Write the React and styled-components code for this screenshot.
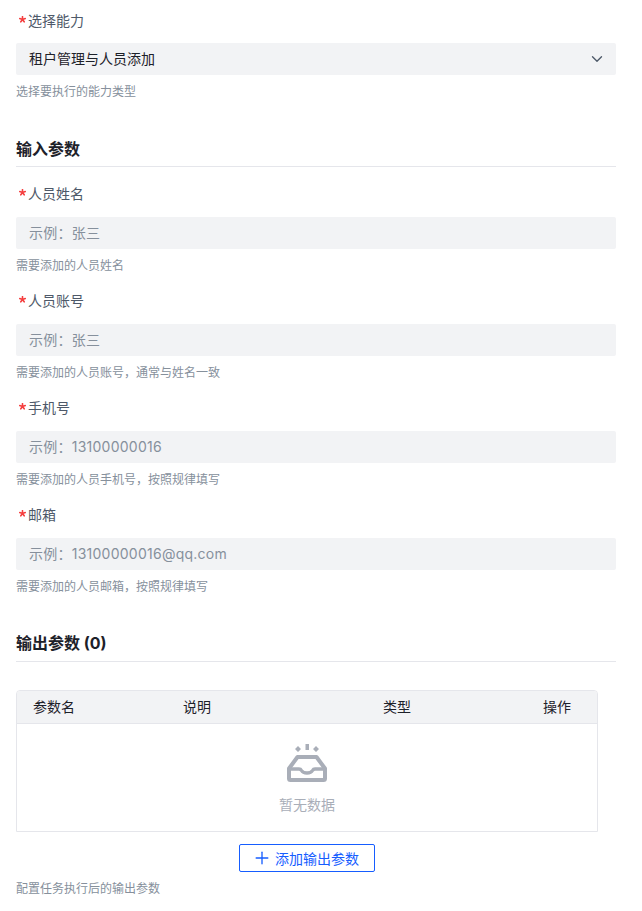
import React from 'react'
import styled, { createGlobalStyle } from 'styled-components'
import { ChevronDown, Plus } from 'lucide-react'

const GlobalStyle = createGlobalStyle`
  html, body {
    margin: 0;
    padding: 0;
    background: #fff;
    font-family: Inter, "Noto Sans CJK SC", sans-serif;
  }
`
const Page = styled.div`
  width: 642px;
  height: 911px;
  padding: 10px 26px 0 16px;
  box-sizing: border-box;
  overflow: hidden;
`
const Field = styled.div`
  margin-bottom: ${props => props.$last ? '0' : '14px'};
`
const Label = styled.div`
  display: flex;
  align-items: center;
  height: 22px;
  margin-bottom: ${props => props.$tight ? '11px' : '12px'};
  padding-bottom: 2px;
  box-sizing: border-box;
  font-size: 14px;
  color: #4e5969;
`
const Star = styled.svg`
  flex: none;
  width: 7px;
  height: 7px;
  margin: 0 2px 2px 3px;
`
const InputBox = styled.input`
  display: block;
  width: 100%;
  height: 32px;
  padding: 0 12px 1px 13px;
  box-sizing: border-box;
  border: none;
  border-radius: 2px;
  outline: none;
  background: #f2f3f5;
  font-family: inherit;
  font-size: 14px;
  letter-spacing: 0.25px;
  color: #1d2129;
  &::placeholder {
    color: #86909c;
    opacity: 1;
  }
`
const SelectBox = styled.div`
  display: flex;
  align-items: center;
  justify-content: space-between;
  height: 32px;
  padding: 0 10px 2px 13px;
  box-sizing: border-box;
  border-radius: 2px;
  background: #f2f3f5;
  font-size: 14px;
  color: #1d2129;
  svg {
    color: #4e5969;
    margin-top: 2px;
  }
`
const Help = styled.div`
  height: 20px;
  margin-top: 7px;
  font-size: 12px;
  line-height: 20px;
  color: #86909c;
`
const SectionTitle = styled.h3`
  height: 24px;
  margin: ${props => props.$before}px 0 ${props => props.$after}px;
  padding-bottom: ${props => props.$pad}px;
  border-bottom: 1px solid #e5e6eb;
  font-size: 16px;
  font-weight: 700;
  line-height: 24px;
  color: #1d2129;
`
const TableWrap = styled.div`
  width: 582px;
  border: 1px solid #e5e6eb;
  border-radius: 4px 4px 0 0;
  box-sizing: border-box;
  overflow: hidden;
`
const HeaderRow = styled.div`
  display: grid;
  grid-template-columns: 150px 200px 160px 1fr;
  align-items: center;
  height: 33px;
  padding: 0 0 3px 16px;
  box-sizing: border-box;
  border-bottom: 1px solid #e5e6eb;
  background: #f2f3f5;
  font-size: 14px;
  color: #1d2129;
`
const Empty = styled.div`
  display: flex;
  flex-direction: column;
  align-items: center;
  height: 107px;
  padding-top: 20px;
  box-sizing: border-box;
  font-size: 14px;
  color: #a9aeb8;
`
const EmptyText = styled.div`
  margin-top: 13px;
  line-height: 20px;
`
const ButtonRow = styled.div`
  display: flex;
  justify-content: center;
  width: 582px;
  margin-top: 12px;
`
const AddButton = styled.button`
  display: flex;
  align-items: center;
  justify-content: center;
  gap: 3px;
  width: 136px;
  height: 28px;
  padding: 0 3px 0 0;
  border: 1px solid #165dff;
  border-radius: 2px;
  background: #fff;
  font-family: inherit;
  font-size: 14px;
  color: #165dff;
`

const fields = [
  { label: '人员姓名', placeholder: '示例：张三', help: '需要添加的人员姓名' },
  { label: '人员账号', placeholder: '示例：张三', help: '需要添加的人员账号，通常与姓名一致' },
  { label: '手机号', placeholder: '示例：13100000016', help: '需要添加的人员手机号，按照规律填写' },
  { label: '邮箱', placeholder: '示例：13100000016@qq.com', help: '需要添加的人员邮箱，按照规律填写' },
]

const RequiredMark = () => (
  <Star viewBox="-11 -11 22 22" stroke="#f53f3f" strokeWidth="5" strokeLinecap="round">
    <path d="M0 0V-9M0 0L8.600 -2.800M0 0L5.300 7.300M0 0L-5.300 7.300M0 0L-8.600 -2.800" />
  </Star>
)

const InboxIcon = () => (
  <svg width="40" height="38" viewBox="0 0 40 38" fill="none">
    <path d="M18.500 0h3.500v6h-3.500z" fill="#a9aeb8" />
    <path d="M11 2l3 3-3 3-3-3zM29 2l3 3-3 3-3-3z" fill="#a9aeb8" />
    <path
      d="M10.500 13h19l8.500 11.500v10a1.500 1.500 0 0 1-1.500 1.500H3.500a1.500 1.500 0 0 1-1.500-1.500V24.500z"
      stroke="#a9aeb8"
      strokeWidth="4"
      strokeLinejoin="round"
    />
    <path
      d="M2 25h10c1.500 0 2 .6 2.500 1.500c1 1.700 3 2.500 5.500 2.500s4.500-.8 5.500-2.500c.5-.9 1-1.500 2.500-1.500h10"
      stroke="#a9aeb8"
      strokeWidth="3.400"
    />
  </svg>
)

export default function App() {
  return (
    <Page>
      <GlobalStyle />
      <Field $last>
        <Label $tight><RequiredMark />选择能力</Label>
        <SelectBox>
          租户管理与人员添加
          <ChevronDown size={18} strokeWidth={1.800} />
        </SelectBox>
        <Help>选择要执行的能力类型</Help>
      </Field>

      <SectionTitle $before={35} $pad={5} $after={16}>输入参数</SectionTitle>
      {fields.map((f, i) => (
        <Field key={f.label} $last={i === fields.length - 1}>
          <Label><RequiredMark />{f.label}</Label>
          <InputBox placeholder={f.placeholder} readOnly />
          <Help>{f.help}</Help>
        </Field>
      ))}

      <SectionTitle $before={34} $pad={6} $after={28}>输出参数 (0)</SectionTitle>
      <TableWrap>
        <HeaderRow>
          <span>参数名</span>
          <span>说明</span>
          <span>类型</span>
          <span>操作</span>
        </HeaderRow>
        <Empty>
          <InboxIcon />
          <EmptyText>暂无数据</EmptyText>
        </Empty>
      </TableWrap>
      <ButtonRow>
        <AddButton><Plus size={20} strokeWidth={1.600} />添加输出参数</AddButton>
      </ButtonRow>
      <Help>配置任务执行后的输出参数</Help>
    </Page>
  )
}
